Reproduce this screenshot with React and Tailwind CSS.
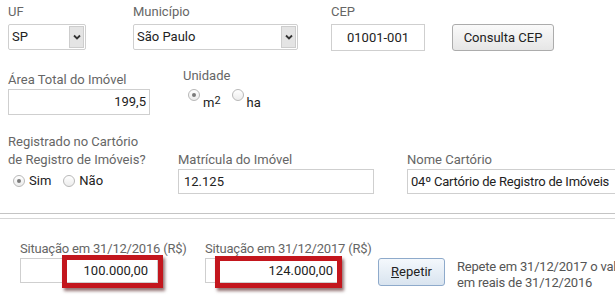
import React from "react";

function Radio({ checked }) {
  return (
    <span className="w-[12px] h-[12px] rounded-full border border-[#b8b8b8] bg-gradient-to-b from-[#ffffff] to-[#ececec] flex items-center justify-center shrink-0">
      {checked && <span className="w-[4px] h-[4px] rounded-full bg-[#7a7a7a]" />}
    </span>
  );
}

function Select({ value, width }) {
  return (
    <div className={`${width} h-[26px] border border-[#cfcfcf] rounded-[2px] bg-white flex items-center justify-between pl-[3px] pr-[1px]`}>
      <span className="text-[13px] text-[#222]">{value}</span>
      <span className="w-[15px] h-[22px] bg-[#e4e4e4] border border-[#cdcdcd] flex items-center justify-center">
        <svg width="8" height="6" viewBox="0 0 8 6">
          <path d="M1 1.5 L4 4.5 L7 1.5" fill="none" stroke="#333" strokeWidth="1.8" />
        </svg>
      </span>
    </div>
  );
}

function Label({ children, className = "" }) {
  return <div className={`text-[13px] leading-[16px] text-[#666] ${className}`}>{children}</div>;
}

function Input({ value, className = "" }) {
  return (
    <div className={`border border-[#cfcfcf] bg-white text-[13px] text-[#222] flex items-center ${className}`}>
      {value}
    </div>
  );
}

function RedMark({ className }) {
  return (
    <div className={`absolute border-[5px] border-[#c3161d] shadow-[2px_3px_3px_rgba(60,0,0,0.55)] ${className}`} />
  );
}

export default function App() {
  return (
    <div className="w-[615px] h-[299px] overflow-hidden bg-white font-['Roboto',sans-serif]">
      {/* row 1 */}
      <div className="flex pt-[4px] pl-[8px]">
        <div className="w-[78px] shrink-0">
          <Label className="mb-[4px]">UF</Label>
          <Select value="SP" width="w-[78px]" />
        </div>
        <div className="w-[165px] ml-[47px] shrink-0">
          <Label className="mb-[4px]">Município</Label>
          <Select value="São Paulo" width="w-[165px]" />
        </div>
        <div className="w-[94px] ml-[33px] shrink-0">
          <Label className="mb-[4px]">CEP</Label>
          <Input value="01001-001" className="h-[27px] justify-center" />
        </div>
        <div className="ml-[27px] pt-[20px] shrink-0">
          <button className="w-[102px] h-[27px] rounded-[3px] border border-[#acacac] bg-gradient-to-b from-[#fafafa] to-[#e6e6e6] text-[13px] text-[#222]">
            Consulta CEP
          </button>
        </div>
      </div>

      {/* row 2 */}
      <div className="flex pl-[8px] mt-[17px]">
        <div className="w-[142px] pt-[4px] shrink-0">
          <Label className="mb-[1px]">Área Total do Imóvel</Label>
          <Input value="199,5" className="h-[26px] justify-end pr-[3px]" />
        </div>
        <div className="ml-[33px] shrink-0">
          <Label>Unidade</Label>
          <div className="flex items-start mt-[5px] pl-[5px]">
            <Radio checked />
            <span className="text-[13px] leading-[16px] text-[#222] mt-[6px] ml-[3px]">
              m<sup className="text-[11px] relative top-[-3px]">2</sup>
            </span>
            <span className="ml-[11px]">
              <Radio />
            </span>
            <span className="text-[13px] leading-[16px] text-[#222] mt-[6px] ml-[3px]">ha</span>
          </div>
        </div>
      </div>

      {/* row 3 */}
      <div className="flex pl-[8px] mt-[18px]">
        <div className="w-[170px] shrink-0">
          <div className="text-[13px] leading-[18px] text-[#666]">
            Registrado no Cartório
            <br />
            de Registro de Imóveis?
          </div>
          <div className="flex items-center h-[16px] mt-[4px] pl-[5px] text-[13px] text-[#222]">
            <Radio checked />
            <span className="ml-[4px]">Sim</span>
            <span className="ml-[12px]">
              <Radio />
            </span>
            <span className="ml-[4px]">Não</span>
          </div>
        </div>
        <div className="w-[196px] pt-[18px] shrink-0">
          <div className="text-[13px] leading-[18px] text-[#666]">Matrícula do Imóvel</div>
          <Input value="12.125" className="h-[25px] pl-[5px]" />
        </div>
        <div className="w-[230px] ml-[33px] pt-[18px] shrink-0">
          <div className="text-[13px] leading-[18px] text-[#666]">Nome Cartório</div>
          <Input value="04º Cartório de Registro de Imóveis" className="h-[25px] pl-[3px] whitespace-nowrap tracking-[-0.2px]" />
        </div>
      </div>

      {/* separator */}
      <div className="mt-[19px] border-t border-[#c4c4c4]" />
      <div className="mt-[4px] border-t border-[#d6d6d6]" />

      {/* row 4 */}
      <div className="flex pl-[20px] mt-[22px]">
        <div className="relative w-[138px] shrink-0">
          <Label className="mb-[1px] whitespace-nowrap tracking-[-0.2px]">Situação em 31/12/2016 (R$)</Label>
          <Input value="100.000,00" className="h-[25px] justify-end pr-[9px]" />
          <RedMark className="left-[42px] top-[14px] w-[101px] h-[33px]" />
        </div>
        <div className="relative w-[135px] ml-[47px] shrink-0">
          <Label className="mb-[1px] whitespace-nowrap tracking-[-0.2px]">Situação em 31/12/2017 (R$)</Label>
          <Input value="124.000,00" className="h-[25px] justify-end pr-[6px]" />
          <RedMark className="left-[10px] top-[15px] w-[127px] h-[32px]" />
        </div>
        <div className="ml-[38px] pt-[17px] shrink-0">
          <button className="w-[67px] h-[28px] rounded-[3px] border border-[#8eaacb] bg-gradient-to-b from-[#f4f8fc] to-[#d9e4ef] text-[13px] text-[#222]">
            <span className="underline">R</span>epetir
          </button>
        </div>
        <div className="ml-[12px] pt-[18px] text-[13px] leading-[16px] text-[#555] whitespace-nowrap shrink-0 tracking-[-0.2px]">
          Repete em 31/12/2017 o val
          <br />
          em reais de 31/12/2016
        </div>
      </div>
    </div>
  );
}
